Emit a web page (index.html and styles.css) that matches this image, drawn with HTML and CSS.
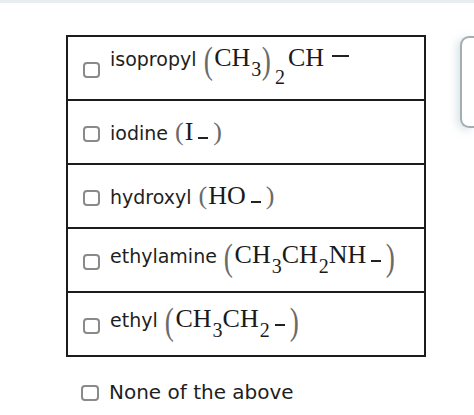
FILE: index.html
```html
<!DOCTYPE html>
<html>
<head>
<meta charset="utf-8">
<link rel="stylesheet" href="styles.css">
</head>
<body>
<div class="topband"></div>
<div class="page">
  <div class="question">
    <div class="options">
      <div class="opt first">
        <span class="box"></span>
        <span class="label">isopropyl <span class="math"><span class="bp">(</span>CH<sub>3</sub><span class="bp">)</span><sub class="s2">2</sub>CH<span class="minus"></span></span></span>
      </div>
      <div class="opt">
        <span class="box"></span>
        <span class="label">iodine <span class="math"><span class="sp">(</span>I<span class="dash"></span><span class="sp">)</span></span></span>
      </div>
      <div class="opt">
        <span class="box"></span>
        <span class="label">hydroxyl <span class="math"><span class="sp">(</span>HO<span class="dash"></span><span class="sp">)</span></span></span>
      </div>
      <div class="opt tall">
        <span class="box"></span>
        <span class="label">ethylamine <span class="math"><span class="bp">(</span>CH<sub>3</sub>CH<sub>2</sub>NH<span class="dash"></span><span class="bp">)</span></span></span>
      </div>
      <div class="opt tall">
        <span class="box"></span>
        <span class="label">ethyl <span class="math"><span class="bp">(</span>CH<sub>3</sub>CH<sub>2</sub><span class="dash"></span><span class="bp">)</span></span></span>
      </div>
    </div>
    <div class="none">
      <span class="box big"></span>
      <span class="nlabel">None of the above</span>
    </div>
  </div>
  <div class="panel"></div>
</div>
</body>
</html>
```
FILE: styles.css
```css
html, body {
  margin: 0;
  padding: 0;
  background: #fff;
  overflow: hidden;
}
body {
  width: 474px;
  height: 415px;
  font-family: "DejaVu Sans", Verdana, sans-serif;
  color: #1e1e1e;
}
.topband {
  height: 3px;
  background: #e8eef0;
}
.page {
  display: flex;
  gap: 34px;
  padding-left: 66px;
  padding-top: 32px;
}
.question {
  width: 360px;
  flex: none;
}
.options {
  border: 2px solid #1c1c1c;
  border-bottom: none;
}
.opt {
  height: 62px;
  border-bottom: 2px solid #1c1c1c;
  display: flex;
  align-items: flex-start;
  padding-left: 15px;
  gap: 10px;
}
.box {
  flex: none;
  width: 13px;
  height: 12px;
  border: 2px solid #8a8a8a;
  border-radius: 4px;
  margin-top: 25px;
}
.label {
  font-size: 19px;
  line-height: 26px;
  white-space: nowrap;
  margin-top: 18px;
}
.first .label {
  margin-top: 8px;
}
.tall .label {
  margin-top: 13px;
}
.math {
  font-family: "Liberation Serif", "Times New Roman", serif;
  font-size: 26px;
  color: #1a1a1a;
}
.math sub {
  font-size: 20px;
  vertical-align: -10px;
  line-height: 0;
  margin-left: 1px;
}
.math sub.s2 {
  vertical-align: -18px;
  margin-left: 2px;
  margin-right: 3px;
}
.bp {
  display: inline-block;
  line-height: 1;
  color: #6a6a6a;
  transform: scale(1.05, 1.43);
  transform-origin: 50% 4px;
  margin: 0 2px 0 1px;
}
.sp {
  color: #6a6a6a;
  margin: 0 1px;
}
.dash {
  display: inline-block;
  width: 10px;
  height: 2px;
  background: #222;
  margin: 0 4px 0 5px;
  vertical-align: 1px;
}
.minus {
  display: inline-block;
  width: 17px;
  height: 2px;
  background: #222;
  margin-left: 8px;
  vertical-align: 9px;
}
.none {
  display: flex;
  align-items: center;
  padding-left: 15px;
  gap: 10px;
  margin-top: 23px;
}
.box.big {
  width: 14px;
  height: 12px;
  margin-top: 2px;
}
.nlabel {
  font-size: 20px;
}
.panel {
  flex: none;
  width: 12px;
  height: 88px;
  margin-top: 1px;
  border: 2px solid #a3aeb0;
  border-right: none;
  border-radius: 9px 0 0 9px;
  box-shadow: -3px 2px 8px rgba(140, 175, 185, 0.35);
}
```
